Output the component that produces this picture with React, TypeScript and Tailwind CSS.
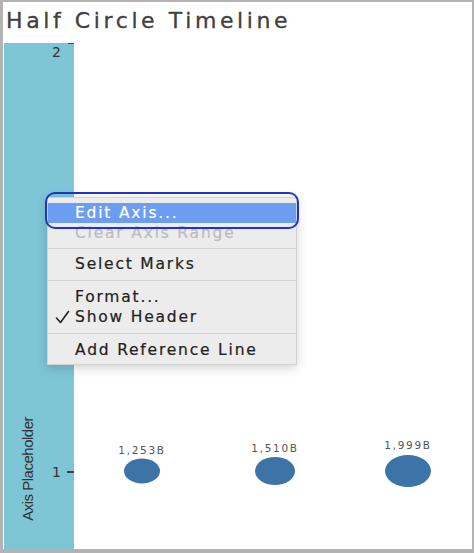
import { Fragment } from "react";

const font = "font-['DejaVu_Sans',sans-serif]";

interface Bubble {
  label: string;
  cx: number;
  rx: number;
  ry: number;
  labelY: number;
}

// positions are inside the plot svg (398 x 506)
const bubbles: Bubble[] = [
  { label: "1,253B", cx: 68, rx: 18, ry: 12.5, labelY: 410.5 },
  { label: "1,510B", cx: 201, rx: 20, ry: 14, labelY: 409 },
  { label: "1,999B", cx: 334, rx: 23, ry: 16, labelY: 406 },
];

type MenuEntry =
  | { kind: "item"; text: string; active?: boolean; disabled?: boolean; checked?: boolean }
  | { kind: "sep"; className: string };

const menu: MenuEntry[] = [
  { kind: "item", text: "Edit Axis...", active: true },
  { kind: "item", text: "Clear Axis Range", disabled: true },
  { kind: "sep", className: "my-[5px]" },
  { kind: "item", text: "Select Marks" },
  { kind: "sep", className: "my-[6px]" },
  { kind: "item", text: "Format..." },
  { kind: "item", text: "Show Header", checked: true },
  { kind: "sep", className: "my-[6px]" },
  { kind: "item", text: "Add Reference Line" },
];

const Check = () => (
  <svg
    className="absolute left-[7px] top-[3px]"
    width="15"
    height="14"
    viewBox="0 0 15 14"
    fill="none"
  >
    <path d="M1.5 8 L5.5 12.5 L13.5 1.5" stroke="#222" strokeWidth="1.6" strokeLinecap="round" strokeLinejoin="round" />
  </svg>
);

const ContextMenu = () => (
  <div className="absolute left-[44px] top-[195px] w-[250px] bg-[#ececec] border border-[#d2d2d2] pt-[5px] pb-[4px] shadow-[0_3px_10px_rgba(0,0,0,0.18)]">
    {menu.map((m, i) =>
      m.kind === "sep" ? (
        <div key={i} className={`h-px bg-[#d4d4d4] ${m.className}`} />
      ) : (
        <div
          key={i}
          className={`relative h-5 pl-[27px] text-[15.5px] leading-5 tracking-[1.8px] whitespace-nowrap [-webkit-text-stroke:0.2px_currentColor] ${font} ${
            m.active
              ? "bg-[#6d9df1] text-white"
              : m.disabled
              ? "text-[#bcbcbc]"
              : "text-[#222]"
          }`}
        >
          {m.checked && <Check />}
          {m.text}
        </div>
      )
    )}
  </div>
);

export default function App() {
  return (
    <div className="relative w-[474px] h-[553px] bg-white border-t-2 border-l-[3px] border-r-2 border-b-4 border-[#b3b3b3] flex flex-col overflow-hidden">
      <div className="h-[41px] shrink-0 pl-[3px] pt-[7px]">
        <h1 className={`text-[22px] leading-6 tracking-[3.6px] text-[#404040] whitespace-nowrap [-webkit-text-stroke:0.3px_currentColor] ${font}`}>
          Half Circle Timeline
        </h1>
      </div>

      <div className="flex flex-1">
        {/* axis column */}
        <div className="ml-px w-[70px] bg-[#7ec5d6] flex flex-col">
          <div className="flex justify-end items-start">
            <span className={`mt-[2px] mr-[7px] text-[14px] leading-[14px] text-[#333] ${font}`}>2</span>
            <div className="w-[6px] h-px bg-[#4a4a4a]" />
          </div>
          <div className="mt-auto pb-[28px] pl-[16px] flex items-center">
            <span className="[writing-mode:vertical-rl] rotate-180 whitespace-nowrap text-[15px] leading-[15px] tracking-[-0.5px] text-[#333] font-['Liberation_Sans',sans-serif]">
              Axis Placeholder
            </span>
            <div className="ml-auto mt-[6px] flex items-center">
              <span className={`text-[14px] leading-[14px] text-[#333] ${font}`}>1</span>
              <div className="ml-[6px] w-[7px] h-[1.5px] bg-[#444]" />
            </div>
          </div>
        </div>

        {/* plot */}
        <div className="flex-1">
          <svg width="398" height="506" viewBox="0 0 398 506">
            {bubbles.map((b) => (
              <Fragment key={b.label}>
                <text
                  x={b.cx}
                  y={b.labelY}
                  textAnchor="middle"
                  fontFamily="DejaVu Sans, sans-serif"
                  fontSize="10.5"
                  letterSpacing="1.7"
                  fill="#555"
                >
                  {b.label}
                </text>
                <ellipse cx={b.cx} cy={428} rx={b.rx} ry={b.ry} fill="#3d74a8" />
              </Fragment>
            ))}
          </svg>
        </div>
      </div>

      <ContextMenu />
      {/* annotation outline round the first menu item */}
      <div className="absolute left-[42px] top-[190px] w-[254px] h-[37px] rounded-[10px] border-2 border-[#1f33cf]" />
    </div>
  );
}
